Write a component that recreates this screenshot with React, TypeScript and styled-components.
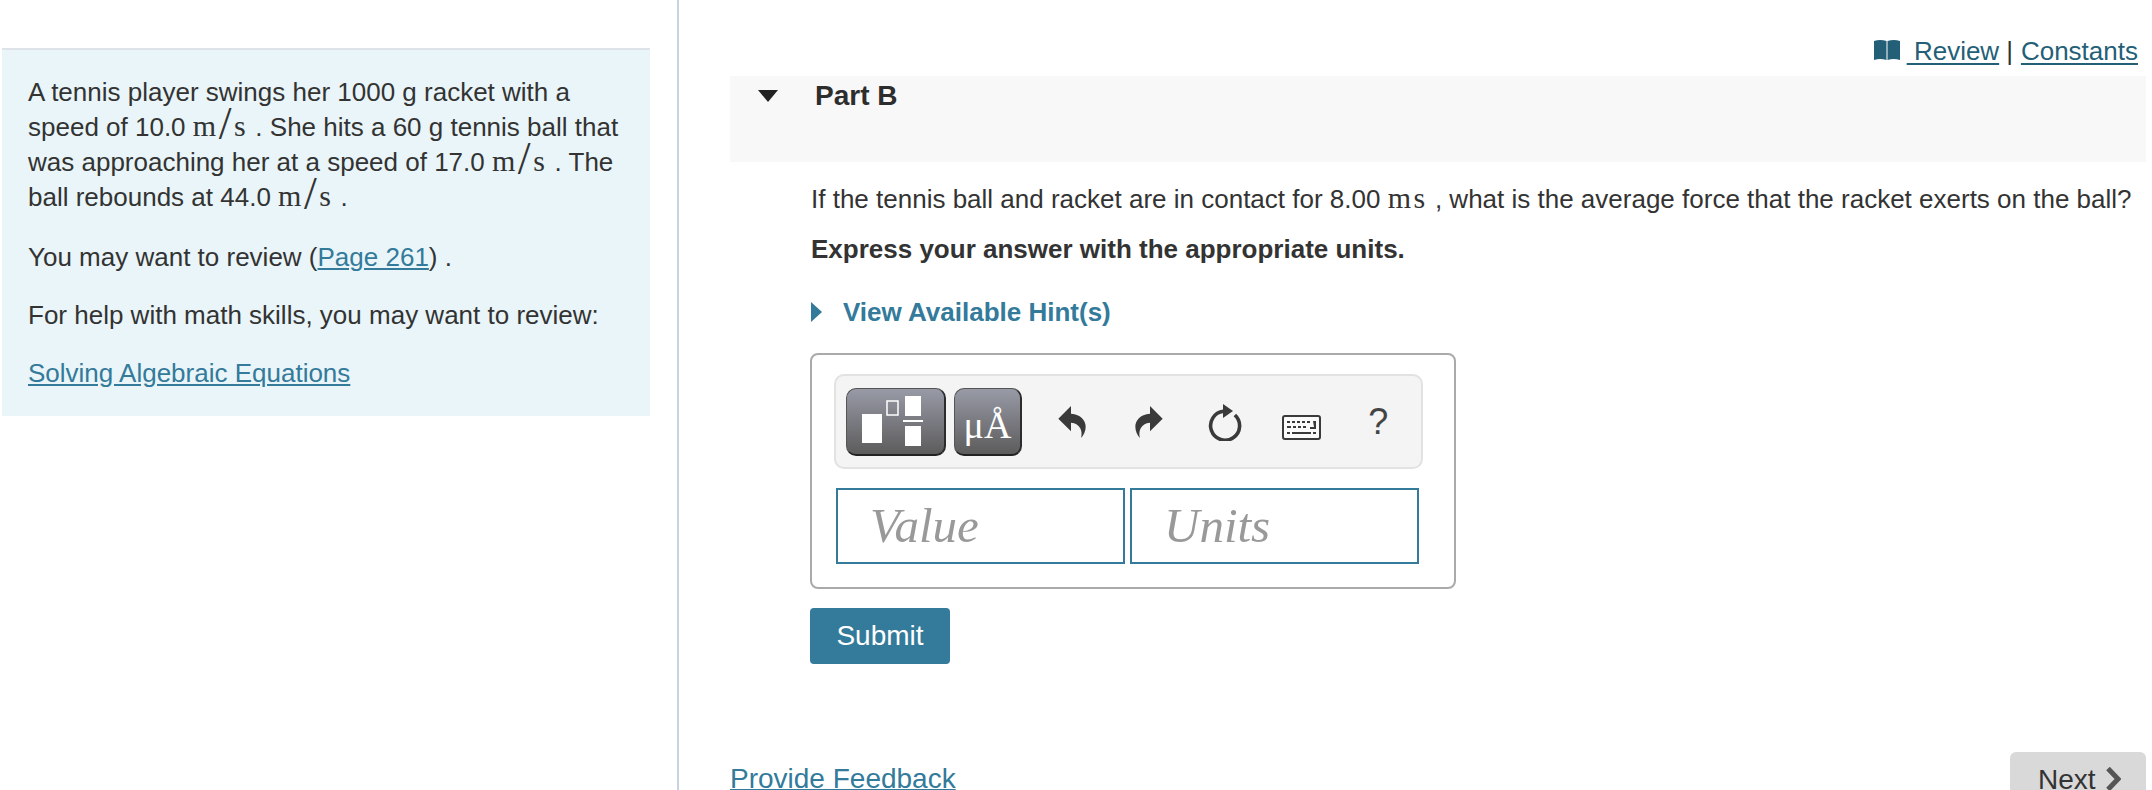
import * as React from 'react';
import styled, { createGlobalStyle } from 'styled-components';

const GlobalStyle = createGlobalStyle`
  html, body {
    margin: 0;
    padding: 0;
    background: #fff;
    overflow: hidden;
  }
  body {
    font-family: "Liberation Sans", Arial, sans-serif;
    font-size: 26px;
    color: #333;
  }
`;

const Page = styled.div`
  display: flex;
  width: 2152px;
  height: 790px;
  overflow: hidden;
`;

/** Left column holding the problem statement */
const Sidebar = styled.aside`
  flex: 0 0 679px;
  box-sizing: border-box;
  padding: 48px 0 0 2px;
  border-right: 2px solid #c9d3e0;
`;

const Intro = styled.div`
  box-sizing: border-box;
  width: 648px;
  height: 368px;
  padding: 25px 20px 0 26px;
  background: #e9f5f8;
  border-top: 2px solid #dde3e8;
`;

const Paragraph = styled.p`
  margin: 0 0 24px;
  line-height: 34px;
  white-space: nowrap;
`;

const Statement = styled(Paragraph)`
  margin-bottom: 25px;
  line-height: 35px;
`;

const TextLink = styled.a`
  color: #337a9b;
  text-decoration: underline;
`;

const Unit = styled.span`
  font-family: "Liberation Serif", serif;
  font-size: 30px;
  line-height: 20px;
  letter-spacing: 2.5px;
`;

const Slash = styled.span`
  display: inline-block;
  font-size: 46px;
  line-height: 20px;
  font-weight: 400;
  vertical-align: -3px;
`;

const Main = styled.main`
  flex: 1;
  box-sizing: border-box;
  padding: 0 6px 0 51px;
  min-width: 0;
`;

const TopBar = styled.div`
  display: flex;
  justify-content: flex-end;
  align-items: center;
  height: 76px;
  padding: 26px 8px 0 0;
  box-sizing: border-box;
  white-space: pre;
`;

const TopLink = styled.a`
  color: #245f78;
  text-decoration: underline;
  text-underline-offset: 3px;
`;

const BookIcon = styled.svg`
  width: 26px;
  height: 20px;
  margin: -2px 7px 0 0;
  flex: none;
`;

const Divider = styled.span`
  margin: 0 8px 0 7px;
`;

const PartHeader = styled.div`
  display: flex;
  align-items: flex-start;
  height: 86px;
  box-sizing: border-box;
  padding: 4px 0 0 28px;
  background: #f8f8f8;
  font-size: 28px;
  font-weight: 700;
  line-height: 32px;
  color: #2d2d2d;
`;

const ToggleDown = styled.span`
  width: 0;
  height: 0;
  margin: 10px 37px 0 0;
  border-left: 10.5px solid transparent;
  border-right: 10.5px solid transparent;
  border-top: 12px solid #222;
`;

const PartBody = styled.div`
  padding: 19px 0 0 81px;
`;

const Question = styled.p`
  margin: 0;
  height: 36px;
  line-height: 36px;
  white-space: nowrap;
`;

const Instruction = styled.p`
  margin: 14px 0 0;
  line-height: 36px;
  font-weight: 700;
`;

const HintRow = styled.div`
  display: flex;
  align-items: center;
  height: 36px;
  margin-top: 27px;
  color: #337a9b;
  font-weight: 700;
`;

const ToggleRight = styled.span`
  width: 0;
  height: 0;
  margin-right: 21px;
  border-top: 10px solid transparent;
  border-bottom: 10px solid transparent;
  border-left: 11px solid #337a9b;
`;

const AnswerBox = styled.div`
  box-sizing: border-box;
  width: 646px;
  height: 236px;
  margin: 23px 0 0 -1px;
  padding: 19px 0 0 22px;
  border: 2px solid #aaa;
  border-radius: 8px;
`;

const Toolbar = styled.div`
  display: flex;
  align-items: flex-start;
  box-sizing: border-box;
  width: 589px;
  height: 95px;
  padding: 12px 0 0 10px;
  background: #f4f4f4;
  border: 2px solid #e2e2e2;
  border-radius: 10px;
`;

const ToolButton = styled.div<{ $width: number }>`
  display: flex;
  align-items: center;
  justify-content: center;
  box-sizing: border-box;
  width: ${(props) => props.$width}px;
  height: 68px;
  margin-right: 8px;
  background: linear-gradient(#989aa6, #5c5c5c);
  border: 1px solid #555;
  border-bottom: 2px solid #222;
  border-right: 2px solid #2c2c2c;
  border-radius: 10px;
  color: #fff;
  font-family: "Liberation Serif", serif;
  font-size: 38px;
  line-height: 1;
`;

const SymbolButton = styled(ToolButton)`
  padding-top: 7px;
`;

const TemplateIcon = styled.svg`
  width: 62px;
  height: 52px;
  margin-right: 6px;
`;

const IconRow = styled.div`
  display: flex;
  margin-left: 4px;
`;

const IconSlot = styled.div`
  display: flex;
  align-items: center;
  justify-content: center;
  width: 76.5px;
  height: 68px;
  color: #3a3a3a;
`;

const KeyboardIcon = styled.svg`
  width: 39px;
  height: 25px;
  margin-top: 10px;
`;

const HelpMark = styled.span`
  font-size: 36px;
  color: #444;
  line-height: 1;
`;

const Fields = styled.div`
  display: flex;
  gap: 5px;
  margin: 19px 0 0 2px;
`;

const Field = styled.div`
  box-sizing: border-box;
  width: 289px;
  height: 76px;
  padding-left: 32px;
  border: 2px solid #337a9b;
  font-family: "Liberation Serif", serif;
  font-size: 49px;
  font-style: italic;
  line-height: 72px;
  color: #999;
`;

const SubmitButton = styled.div`
  display: flex;
  align-items: center;
  justify-content: center;
  width: 140px;
  height: 56px;
  margin: 19px 0 0 -1px;
  background: #337a9b;
  border-radius: 4px;
  color: #fff;
  font-size: 28px;
`;

const Footer = styled.div`
  display: flex;
  justify-content: space-between;
  align-items: flex-start;
  margin-top: 88px;
  font-size: 28px;
`;

const FeedbackLink = styled(TextLink)`
  margin-top: 14px;
  line-height: 26px;
  text-decoration-thickness: 2px;
  text-underline-offset: 1px;
`;

const NextButton = styled.div`
  display: flex;
  align-items: flex-start;
  gap: 9px;
  box-sizing: border-box;
  width: 136px;
  height: 40px;
  padding: 16px 0 0 28px;
  background: #d9d9d9;
  border-radius: 6px 6px 0 0;
  color: #333;
  line-height: 24px;
`;

const Chevron = styled.svg`
  width: 16px;
  height: 24px;
  margin-top: -1px;
  flex: none;
`;

const MetersPerSecond: React.FC = () => (
  <Unit>
    m<Slash>/</Slash>s
  </Unit>
);

const UndoIcon: React.FC<{ flip?: boolean }> = ({ flip }) => (
  <svg
    width="28"
    height="32"
    viewBox="0 0 82 96"
    style={flip ? { transform: 'scaleX(-1)' } : undefined}
    fill="currentColor"
  >
    <path d="M0 38 L38 0 V23 C68 25 82 44 82 62 C82 75 76 88 68 96 C74 76 66 52 38 50 V76 Z" />
  </svg>
);

const App: React.FC = () => (
  <Page>
    <GlobalStyle />
    <Sidebar>
      <Intro>
        <Statement>
          A tennis player swings her 1000 g racket with a
          <br />
          speed of 10.0 <MetersPerSecond /> . She hits a 60 g tennis ball that
          <br />
          was approaching her at a speed of 17.0 <MetersPerSecond /> . The
          <br />
          ball rebounds at 44.0 <MetersPerSecond /> .
        </Statement>
        <Paragraph>
          You may want to review (<TextLink>Page 261</TextLink>) .
        </Paragraph>
        <Paragraph>For help with math skills, you may want to review:</Paragraph>
        <Paragraph>
          <TextLink>Solving Algebraic Equations</TextLink>
        </Paragraph>
      </Intro>
    </Sidebar>
    <Main>
      <TopBar>
        <BookIcon viewBox="0 0 26 20">
          <path d="M0 1 Q6 -1 12.5 1 V20 Q6 18 0 20 Z" fill="#245f78" />
          <path d="M13.5 1 Q20 -1 26 1 V20 Q20 18 13.5 20 Z" fill="#245f78" />
        </BookIcon>
        <TopLink> Review</TopLink>
        <Divider>|</Divider>
        <TopLink>Constants</TopLink>
      </TopBar>
      <PartHeader>
        <ToggleDown />
        Part B
      </PartHeader>
      <PartBody>
        <Question>
          If the tennis ball and racket are in contact for 8.00 <Unit>ms</Unit> , what is the
          average force that the racket exerts on the ball?
        </Question>
        <Instruction>Express your answer with the appropriate units.</Instruction>
        <HintRow>
          <ToggleRight />
          View Available Hint(s)
        </HintRow>
        <AnswerBox>
          <Toolbar>
            <ToolButton $width={100}>
              <TemplateIcon viewBox="0 0 62 52">
                <rect x="0" y="18" width="20" height="29" fill="#fff" />
                <rect x="25" y="5" width="11" height="14" fill="none" stroke="#fff" strokeWidth="1.5" />
                <rect x="43" y="0" width="16" height="20" fill="#fff" />
                <rect x="41" y="24" width="20" height="2" fill="#fff" />
                <rect x="43" y="30" width="16" height="20" fill="#fff" />
              </TemplateIcon>
            </ToolButton>
            <SymbolButton $width={68}>μÅ</SymbolButton>
            <IconRow>
              <IconSlot>
                <UndoIcon />
              </IconSlot>
              <IconSlot>
                <UndoIcon flip />
              </IconSlot>
              <IconSlot>
                <svg width="34" height="38" viewBox="0 0 34 38">
                  <path
                    d="M11 9.5 A14.5 14.5 0 1 0 23 9.5"
                    fill="none"
                    stroke="currentColor"
                    strokeWidth="3.6"
                    transform="rotate(18 17 23)"
                  />
                  <path d="M15 1 L25 8 L15 15 Z" fill="currentColor" />
                </svg>
              </IconSlot>
              <IconSlot>
                <KeyboardIcon viewBox="0 0 39 25">
                  <rect x="1" y="1" width="37" height="23" rx="2" fill="#fafafa" stroke="currentColor" strokeWidth="2" />
                  <path
                    d="M5 6h3v2H5zM10 6h3v2h-3zM15 6h3v2h-3zM20 6h3v2h-3zM25 6h3v2h-3zM31 6h3v8h-6v-2h4zM5 11h4v2H5zM11 11h3v2h-3zM16 11h3v2h-3zM21 11h3v2h-3zM5 17h3v2H5zM10 17h19v2H10zM31 17h3v2h-3z"
                    fill="currentColor"
                  />
                </KeyboardIcon>
              </IconSlot>
              <IconSlot>
                <HelpMark>?</HelpMark>
              </IconSlot>
            </IconRow>
          </Toolbar>
          <Fields>
            <Field>Value</Field>
            <Field>Units</Field>
          </Fields>
        </AnswerBox>
        <SubmitButton>Submit</SubmitButton>
      </PartBody>
      <Footer>
        <FeedbackLink>Provide Feedback</FeedbackLink>
        <NextButton>
          Next
          <Chevron viewBox="0 0 16 24">
            <path d="M3 1.5 L13 12 L3 22.5" fill="none" stroke="#555" strokeWidth="5" />
          </Chevron>
        </NextButton>
      </Footer>
    </Main>
  </Page>
);

export default App;
